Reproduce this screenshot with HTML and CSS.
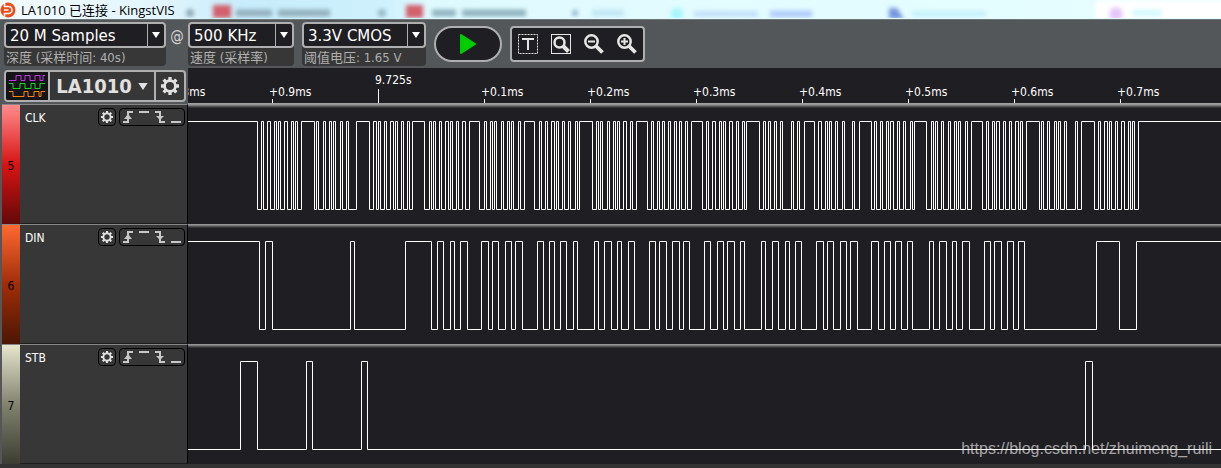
FILE: index.html
```
<!DOCTYPE html>
<html lang="zh-CN">
<head>
  <meta charset="UTF-8">
  <meta name="viewport" content="width=device-width, initial-scale=1.0">
  <title>LA1010 已连接 - KingstVIS</title>
  <link rel="stylesheet" href="styles.css">
</head>
<body>
  <!-- shared icons -->
  <svg class="symbols" width="0" height="0" aria-hidden="true">
    <symbol id="caret" viewBox="0 0 8 6"><path d="M0 0h8L4 6z" fill="currentColor"/></symbol>
    <symbol id="gear" viewBox="0 0 24 24">
      <circle cx="12" cy="12" r="7.200" fill="none" stroke="currentColor" stroke-width="3.600"/>
      <path d="M12 0v5M12 19v5M0 12h5M19 12h5M3.500 3.500L7 7M17 17l3.500 3.500M20.500 3.500L17 7M7 17l-3.500 3.500" stroke="currentColor" stroke-width="4.400"/>
    </symbol>
    <symbol id="rise" viewBox="0 0 16 16"><path d="M3 13h5V3h5" fill="none" stroke="currentColor" stroke-width="2"/><path d="M8 5l4 5H4z" fill="currentColor"/></symbol>
    <symbol id="high" viewBox="0 0 16 16"><path d="M3 3h10" stroke="currentColor" stroke-width="2"/></symbol>
    <symbol id="fall" viewBox="0 0 16 16"><path d="M3 3h5v10h5" fill="none" stroke="currentColor" stroke-width="2"/><path d="M8 11L4 7h8z" fill="currentColor"/></symbol>
    <symbol id="low" viewBox="0 0 16 16"><path d="M3 13h10" stroke="currentColor" stroke-width="2"/></symbol>
  </svg>

  <header class="titlebar">
    <svg class="glass" width="1221" height="18" aria-hidden="true">
      <defs><filter id="soft" x="-20%" y="-60%" width="140%" height="220%"><feGaussianBlur stdDeviation="2"/></filter></defs>
      <g filter="url(#soft)">
        <circle cx="190" cy="13" r="4" fill="#8fa9b5"/>
        <rect x="213" y="5" width="18" height="13" fill="#d2606d"/>
        <path d="M236 13h36M278 13h52" stroke="#93afbd" stroke-width="7"/>
        <circle cx="382" cy="13" r="4" fill="#97b8c6"/>
        <rect x="406" y="5" width="17" height="13" fill="#d2606d"/>
        <path d="M432 13h24M462 13h64" stroke="#8fb3c0" stroke-width="7"/>
        <circle cx="575" cy="13" r="3" fill="#8eafc8"/>
        <path d="M592 13h32" stroke="#c2e7f4" stroke-width="7"/>
        <circle cx="677" cy="14" r="6" fill="#a5f7fb"/>
        <path d="M694 14h64" stroke="#c0dcf8" stroke-width="5"/>
        <path d="M770 14h42" stroke="#b3ccfb" stroke-width="7"/>
        <path d="M889 8h8l7 11h-15z" fill="#7896dc"/>
        <path d="M912 14h74" stroke="#c6f3fa" stroke-width="6"/>
        <path d="M1095 0h140v24h-140z" fill="#fff"/>
        <circle cx="1116" cy="14" r="7" fill="#e5c7fb"/>
        <path d="M1132 13h30" stroke="#d8fbff" stroke-width="8"/>
      </g>
    </svg>
    <svg class="logo" width="16" height="16" viewBox="0 0 16 16" aria-hidden="true">
      <circle cx="8" cy="8" r="7.500" fill="#f04d1c"/>
      <path d="M4.500 0v4.500h4a3.500 3.500 0 0 1 0 7h-4V16" fill="none" stroke="#fff" stroke-width="1.500"/>
      <path d="M4 8h4.500" stroke="#fff" stroke-width="1.500"/>
    </svg>
    <h1>LA1010 已连接 - KingstVIS</h1>
  </header>

  <div class="toolbar">
    <div class="combo depth">
      <div class="combo-box">
        <select id="depth"><option>20 M Samples</option></select>
        <svg class="arrow" width="8" height="6"><use href="#caret"/></svg>
      </div>
      <label for="depth">深度 (采样时间: 40s)</label>
    </div>
    <span class="at">@</span>
    <div class="combo rate">
      <div class="combo-box">
        <select id="rate"><option>500 KHz</option></select>
        <svg class="arrow" width="8" height="6"><use href="#caret"/></svg>
      </div>
      <label for="rate">速度 (采样率)</label>
    </div>
    <div class="combo level">
      <div class="combo-box">
        <select id="level"><option>3.3V CMOS</option></select>
        <svg class="arrow" width="8" height="6"><use href="#caret"/></svg>
      </div>
      <label for="level">阈值电压: 1.65 V</label>
    </div>
    <button type="button" class="play" aria-label="Start">
      <svg width="16" height="20" viewBox="0 0 16 20"><path d="M1 1l14 9L1 19z" fill="#00cd00" stroke="#00cd00" stroke-width="2" stroke-linejoin="round"/></svg>
    </button>
    <div class="tools">
      <button type="button" aria-label="Trigger position">
        <svg width="20" height="20" viewBox="0 0 20 20" fill="none">
          <rect x=".5" y=".5" width="19" height="19" stroke="#e6e6e6" stroke-dasharray="2 1"/>
          <path d="M4 5h12M10 5v11" stroke="#e6e6e6" stroke-width="2"/>
        </svg>
      </button>
      <button type="button" aria-label="Zoom to fit">
        <svg width="20" height="20" viewBox="0 0 20 20" fill="none" stroke="#e6e6e6">
          <rect x=".5" y=".5" width="19" height="19"/>
          <circle cx="8.500" cy="8.500" r="5" stroke-width="2.500"/>
          <path d="M12 12l5.500 5.500" stroke-width="4"/>
        </svg>
      </button>
      <button type="button" aria-label="Zoom out">
        <svg width="20" height="20" viewBox="0 0 20 20" fill="none" stroke="#e6e6e6">
          <circle cx="7.500" cy="7.500" r="6.200" stroke-width="2.500"/>
          <path d="M4 7.500h7" stroke-width="2"/>
          <path d="M12 12l6.500 6.500" stroke-width="3.800"/>
        </svg>
      </button>
      <button type="button" aria-label="Zoom in">
        <svg width="20" height="20" viewBox="0 0 20 20" fill="none" stroke="#e6e6e6">
          <circle cx="7.500" cy="7.500" r="6.200" stroke-width="2.500"/>
          <path d="M4 7.500h7M7.500 4v7" stroke-width="2"/>
          <path d="M12 12l6.500 6.500" stroke-width="3.800"/>
        </svg>
      </button>
    </div>
  </div>

  <div class="head">
    <div class="device-cell">
      <div class="device">
        <svg class="signals" width="42" height="28" viewBox="0 0 42 28" fill="none" aria-hidden="true">
          <path d="M3 8.500h7v-5h5v5h4v-5h5v5h5v-5h5v5h3v-5h2" stroke="#c832f0"/>
          <path d="M3 11.500h4v5h7v-5h5v5h6v-5h4v5h5v-5h5" stroke="#10dc20"/>
          <path d="M3 19.500h4v5h11v-5h4v5h6v-5h5v5h2v-5h4" stroke="#ff8200"/>
        </svg>
        <button type="button" class="device-name">LA1010 <svg width="10" height="7"><use href="#caret"/></svg></button>
        <button type="button" class="device-setup" aria-label="Device settings"><svg width="18" height="18"><use href="#gear"/></svg></button>
      </div>
    </div>
    <div class="ruler">
      <div class="mark">+0.8ms</div>
      <div class="mark">+0.9ms</div>
      <div class="mark major">9.725s</div>
      <div class="mark">+0.1ms</div>
      <div class="mark">+0.2ms</div>
      <div class="mark">+0.3ms</div>
      <div class="mark">+0.4ms</div>
      <div class="mark">+0.5ms</div>
      <div class="mark">+0.6ms</div>
      <div class="mark">+0.7ms</div>
    </div>
  </div>

  <main class="channels">
    <section class="channel">
      <div class="strip red">5</div>
      <div class="info">
        <span class="name">CLK</span>
        <button type="button" class="setup" aria-label="CLK settings"><svg width="12" height="12"><use href="#gear"/></svg></button>
        <div class="triggers">
          <button type="button" aria-label="Rising edge"><svg width="16" height="16"><use href="#rise"/></svg></button>
          <button type="button" aria-label="High level"><svg width="16" height="16"><use href="#high"/></svg></button>
          <button type="button" aria-label="Falling edge"><svg width="16" height="16"><use href="#fall"/></svg></button>
          <button type="button" aria-label="Low level"><svg width="16" height="16"><use href="#low"/></svg></button>
        </div>
      </div>
      <div class="wave"><svg><path id="clk"/></svg></div>
    </section>
    <section class="channel">
      <div class="strip orange">6</div>
      <div class="info">
        <span class="name">DIN</span>
        <button type="button" class="setup" aria-label="DIN settings"><svg width="12" height="12"><use href="#gear"/></svg></button>
        <div class="triggers">
          <button type="button" aria-label="Rising edge"><svg width="16" height="16"><use href="#rise"/></svg></button>
          <button type="button" aria-label="High level"><svg width="16" height="16"><use href="#high"/></svg></button>
          <button type="button" aria-label="Falling edge"><svg width="16" height="16"><use href="#fall"/></svg></button>
          <button type="button" aria-label="Low level"><svg width="16" height="16"><use href="#low"/></svg></button>
        </div>
      </div>
      <div class="wave"><svg><path id="din"/></svg></div>
    </section>
    <section class="channel">
      <div class="strip sand">7</div>
      <div class="info">
        <span class="name">STB</span>
        <button type="button" class="setup" aria-label="STB settings"><svg width="12" height="12"><use href="#gear"/></svg></button>
        <div class="triggers">
          <button type="button" aria-label="Rising edge"><svg width="16" height="16"><use href="#rise"/></svg></button>
          <button type="button" aria-label="High level"><svg width="16" height="16"><use href="#high"/></svg></button>
          <button type="button" aria-label="Falling edge"><svg width="16" height="16"><use href="#fall"/></svg></button>
          <button type="button" aria-label="Low level"><svg width="16" height="16"><use href="#low"/></svg></button>
        </div>
      </div>
      <div class="wave"><svg><path id="stb"/></svg></div>
    </section>
    <span class="watermark">https://blog.csdn.net/zhuimeng_ruili</span>
  </main>

  <script src="waves.js"></script>
</body>
</html>
```

FILE: styles.css
```
* {
  box-sizing: border-box;
}

body {
  margin: 0;
  min-height: 100vh;
  background-color: #333333;
  color: white;
  font-family: 'DejaVu Sans Condensed', 'DejaVu Sans', 'Noto Sans CJK SC', sans-serif;
  font-size: 12px;
  overflow-x: hidden;
}

svg {
  display: block;
}

button {
  margin: 0;
  padding: 0;
  border: 0;
  background: none;
  color: #e1e1e1;
  font: inherit;
  cursor: pointer;
}

.symbols {
  position: absolute;
}

/* title bar */
.titlebar {
  position: relative;
  display: flex;
  align-items: center;
  gap: 5px;
  height: 20px;
  overflow: hidden;
  background: linear-gradient(to right, #f2fbff 0, #e2f5fd 160px, #c8ecfb 240px, #cdf0fc 380px, #dffaff 430px, #e6feff 100%);
  border-bottom: 1px solid #6f7678;
}

.glass {
  position: absolute;
  top: 0;
  left: 0;
}

.logo {
  position: relative;
}

h1 {
  position: relative;
  margin: 0;
  color: black;
  font: 13px/16px 'Open Sans', 'Noto Sans CJK SC', sans-serif;
}

/* toolbar */
.toolbar {
  display: flex;
  align-items: flex-start;
  height: 48px;
  padding: 2px 4px;
  background-color: #54575a;
}

.combo {
  height: 44px;
  background-color: #373737;
  border-radius: 4px;
}

.depth {
  width: 162px;
}

.rate {
  width: 106px;
  margin-right: 8px;
}

.level {
  width: 124px;
  margin-right: 8px;
}

.combo-box {
  position: relative;
}

select {
  appearance: none;
  display: block;
  width: 100%;
  height: 26px;
  padding: 2px 20px 0 4px;
  border: 2px solid #afafaf;
  border-radius: 4px;
  background: linear-gradient(to left, transparent 16px, #afafaf 16px, #afafaf 17px, transparent 17px) #1f1e23;
  color: white;
  font: 15px 'DejaVu Sans', sans-serif;
}

.arrow {
  position: absolute;
  top: 10px;
  right: 6px;
  pointer-events: none;
}

.combo label {
  display: block;
  padding-left: 2px;
  color: #afafaf;
  font-size: 13px;
  line-height: 20px;
  white-space: nowrap;
}

.at {
  width: 22px;
  color: #d2d2d2;
  font-size: 15px;
  line-height: 28px;
  text-align: center;
}

.play {
  display: flex;
  align-items: center;
  justify-content: center;
  width: 68px;
  height: 36px;
  margin: 4px 8px 0 0;
  border: 2px solid #afafaf;
  border-radius: 18px;
  background-color: #1f1e23;
}

.tools {
  display: flex;
  align-items: center;
  gap: 13px;
  height: 36px;
  margin-top: 4px;
  padding: 0 6px;
  border: 2px solid #afafaf;
  border-radius: 4px;
  background-color: #1f1e23;
}

/* device box and time ruler */
.head {
  display: flex;
  height: 36px;
  background-color: #54575a;
}

.device-cell {
  flex: none;
  width: 188px;
  padding: 2px 2px 2px 4px;
}

.device {
  display: flex;
  height: 32px;
  border: 2px solid #afafaf;
  border-radius: 4px;
  background-color: #373737;
  overflow: hidden;
}

.signals {
  flex: none;
  background-color: #141416;
}

.device-name {
  display: flex;
  flex: 1;
  align-items: center;
  justify-content: center;
  gap: 6px;
  border-left: 2px solid #afafaf;
  border-right: 2px solid #afafaf;
  font-size: 20px;
  font-weight: bold;
}

.device-setup {
  display: flex;
  align-items: center;
  justify-content: center;
  width: 28px;
}

.ruler {
  display: flex;
  flex: 1;
  min-width: 0;
  overflow: hidden;
  background-color: #1f1e23;
  border-bottom: 1px solid #a0a0a0;
}

.mark {
  flex: none;
  display: flex;
  flex-direction: column;
  justify-content: flex-end;
  width: 106px;
  line-height: 14px;
}

/* the first mark has scrolled partly out of view */
.mark:first-child {
  margin-left: -25px;
}

.mark::after {
  content: '';
  width: 1px;
  height: 4px;
  margin-left: 3px;
  background-color: white;
}

.mark.major::after {
  height: 14px;
  margin-top: 2px;
}

/* channels */
.channels {
  position: relative;
  border-left: 2px solid #54575a;
}

.channel {
  display: flex;
  height: 120px;
}

.strip {
  flex: none;
  width: 18px;
  border-top: 1px solid #878787;
  color: black;
  line-height: 122px;
  text-align: center;
}

.red {
  background: linear-gradient(#ff8c8c, #d71414 50%, #640808);
}

.orange {
  background: linear-gradient(#ff6932, #a02d08 50%, #4b1604);
}

.sand {
  background: linear-gradient(#e6e6cd, #828270 50%, #3c3c32);
}

.info {
  flex: none;
  display: flex;
  align-items: flex-start;
  width: 168px;
  padding: 3px 2px 0 5px;
  background-color: #373737;
  border-top: 1px solid #878787;
  border-right: 1px solid black;
  border-bottom: 1px solid #1e1e1e;
}

.name {
  flex: 1;
  line-height: 21px;
}

.setup,
.triggers {
  display: flex;
  align-items: center;
  justify-content: center;
  height: 18px;
  border: 1px solid black;
  border-radius: 4px;
}

.setup {
  width: 18px;
  margin-right: 3px;
}

.triggers button {
  color: #c8c8c8;
}

.wave {
  flex: 1;
  min-width: 0;
  background: linear-gradient(#969696 1px, #787878 1px, #787878 2px, #505050 2px, #505050 3px, #323232 3px, #323232 4px, #1f1e23 4px);
}

.wave svg {
  width: 100%;
  height: 120px;
}

.wave path {
  fill: none;
  stroke: white;
  stroke-width: 1px;
}

.watermark {
  position: absolute;
  right: 9px;
  bottom: 5px;
  color: rgba(255, 255, 255, 0.6);
  font: 16px/20px 'Liberation Sans', Arial, sans-serif;
}
```

FILE: waves.js
```
// x positions at which each signal toggles
const edges = {
  clk: [
    69, 73, 75, 79, 82, 86, 88, 90, 92, 96, 99, 103, 105, 107, 109, 113,
    126, 128, 130, 135, 137, 141, 143, 145, 147, 152, 154, 158, 160, 168,
    181, 185, 188, 190, 192, 196, 198, 202, 205, 207, 209, 213, 215, 219, 221, 224,
    236, 241, 243, 245, 247, 251, 253, 257, 260, 262, 264, 268, 270, 274, 277, 281,
    291, 296, 298, 302, 304, 306, 308, 313, 315, 319, 321, 323, 325, 330, 332, 336,
    346, 351, 353, 357, 359, 363, 366, 368, 370, 374, 376, 380, 382, 387, 389, 391,
    404, 408, 410, 412, 414, 419, 421, 425, 427, 429, 431, 435, 438, 442, 444, 448,
    459, 463, 465, 469, 471, 474, 476, 480, 482, 486, 488, 491, 493, 497, 499, 503,
    514, 518, 520, 524, 527, 531, 533, 535, 537, 541, 544, 548, 550, 554, 556, 558,
    571, 575, 577, 580, 582, 586, 588, 592, 594, 603, 605, 609, 611, 616,
    626, 630, 633, 637, 639, 641, 643, 647, 649, 654, 656, 664, 666, 671,
    683, 686, 688, 692, 694, 698, 700, 702, 705, 709, 711, 715, 717, 722, 724, 726,
    738, 743, 745, 747, 749, 753, 755, 760, 762, 766, 768, 770, 772, 777, 779, 783,
    794, 798, 800, 804, 806, 808, 811, 815, 817, 821, 823, 827, 830, 832, 834, 838,
    851, 853, 855, 859, 861, 866, 868, 870, 872, 876, 878, 887, 889, 893,
    906, 910, 912, 916, 919, 921, 923, 927, 929, 933, 936, 940, 942, 944, 946, 950
  ],
  din: [
    71, 77, 84, 162, 166, 217, 243, 249, 255, 262, 266, 272,
    279, 293, 300, 304, 310, 317, 323, 327, 334, 349, 355, 361, 366, 372, 378, 385,
    389, 406, 410, 416, 423, 429, 433, 440, 446, 461, 467, 471, 478, 484, 491, 495,
    501, 516, 522, 529, 535, 539, 546, 552, 556, 573, 577, 584, 590, 597, 601, 607,
    613, 628, 635, 639, 645, 652, 658, 662, 669, 683, 690, 696, 702, 707, 713, 719,
    724, 741, 745, 751, 758, 764, 768, 774, 781, 796, 802, 806, 813, 819, 825, 830,
    836, 908, 931, 948
  ],
  stb: [52, 69, 118, 124, 173, 179, 897, 904]
};

const HIGH = 17.5;
const LOW = 105.5;

function drawWave(id, startHigh) {
  let high = startHigh;
  let d = `M0 ${high ? HIGH : LOW}`;
  for (const x of edges[id]) {
    high = !high;
    d += `H${x + 0.5}V${high ? HIGH : LOW}`;
  }
  // hold the last level to the edge of the window
  document.getElementById(id).setAttribute('d', d + 'H5000');
}

drawWave('clk', true);
drawWave('din', true);
drawWave('stb', false);
```
